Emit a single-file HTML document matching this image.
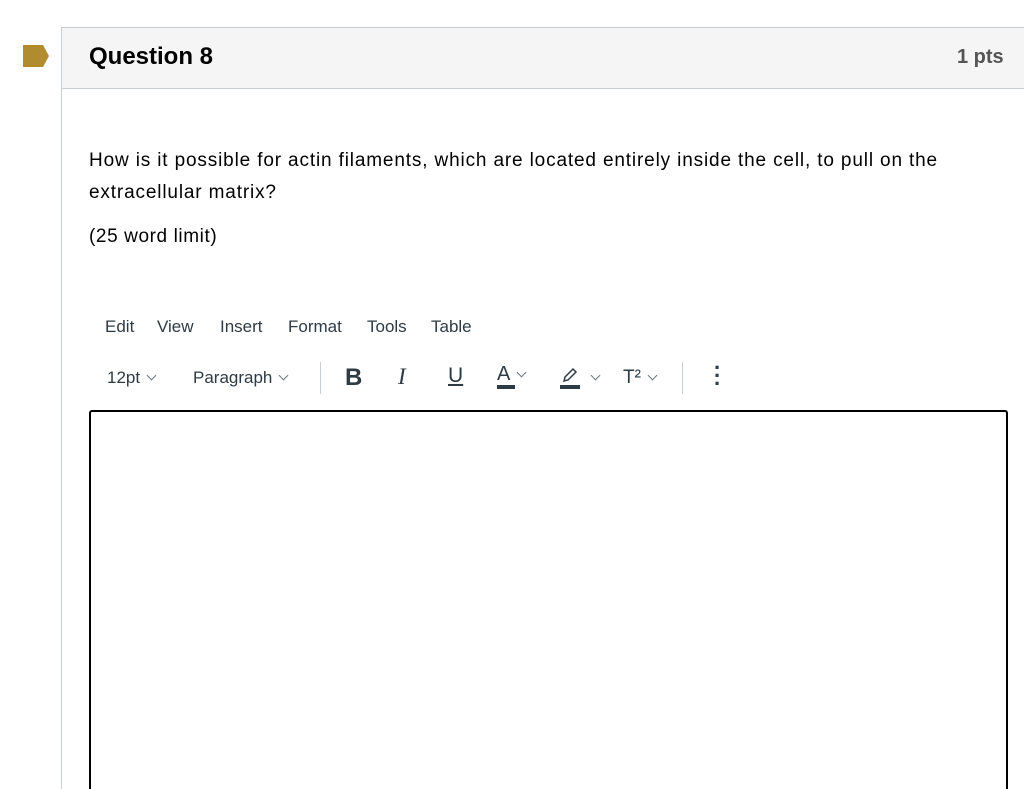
<!DOCTYPE html>
<html style="overflow:hidden;height:789px"><head><style>
body{margin:0;width:1024px;height:789px;overflow:hidden;background:#fff;font-family:"Liberation Sans",sans-serif;color:#2d3b45;position:relative}
.panel{position:absolute;left:61px;top:27px;width:1000px;height:762px;border:1px solid #c7cdd1;border-bottom:none;box-sizing:border-box}
.hdr{position:absolute;left:62px;top:28px;width:962px;height:60px;background:#f5f5f5;border-bottom:1px solid #c7cdd1}
.t{position:absolute;white-space:nowrap}
.chev{display:inline-block;width:6px;height:6px;border-right:1px solid #6b7780;border-bottom:1px solid #6b7780;transform:rotate(45deg);margin:0 0 4px 8px}
.m{position:absolute;top:317px;font-size:17px}
</style></head><body>
<svg style="position:absolute;left:23px;top:45px" width="26" height="22"><polygon points="0,0 20,0 26,11 20,22 0,22" fill="#b08c2e"/></svg>
<div class="panel"></div>
<div class="hdr"></div>
<div class="t" style="left:89px;top:43px;font-size:24px;font-weight:bold;color:#000">Question 8</div>
<div class="t" style="left:957px;top:46px;font-size:20px;font-weight:bold;color:#555">1 pts</div>
<div class="t" style="left:89px;top:145px;font-size:19px;line-height:32px;color:#000;letter-spacing:0.85px">How is it possible for actin filaments, which are located entirely inside the cell, to pull on the<br>extracellular matrix?</div>
<div class="t" style="left:89px;top:226px;font-size:19px;color:#000;letter-spacing:0.6px">(25 word limit)</div>
<div class="m" style="left:105px">Edit</div>
<div class="m" style="left:157px">View</div>
<div class="m" style="left:220px">Insert</div>
<div class="m" style="left:288px">Format</div>
<div class="m" style="left:367px">Tools</div>
<div class="m" style="left:431px">Table</div>
<div class="t" style="left:107px;top:368px;font-size:17px">12pt<span class="chev"></span></div>
<div class="t" style="left:193px;top:368px;font-size:17px">Paragraph<span class="chev"></span></div>
<div style="position:absolute;left:320px;top:362px;width:1px;height:32px;background:#c7cdd1"></div>
<div class="t" style="left:345px;top:364px;font-size:24px;font-weight:bold">B</div>
<div class="t" style="left:398px;top:364px;font-size:23px;font-style:italic;font-family:'Liberation Serif',serif">I</div>
<div class="t" style="left:448px;top:364px;font-size:21px;text-decoration:underline">U</div>
<div class="t" style="left:497px;top:363px;font-size:20px">A<span class="chev"></span></div>
<div style="position:absolute;left:497px;top:385px;width:18px;height:4px;background:#2d3b45"></div>
<svg style="position:absolute;left:560px;top:366px" width="20" height="18"><path d="M4 15 L5 11 L13 3 L16 6 L8 14 Z" fill="none" stroke="#2d3b45" stroke-width="1.5"/></svg>
<div style="position:absolute;left:560px;top:385px;width:20px;height:4px;background:#2d3b45"></div>
<div class="chev" style="position:absolute;left:584px;top:372px"></div>
<div class="t" style="left:623px;top:367px;font-size:19px">T²<span class="chev"></span></div>
<div style="position:absolute;left:682px;top:362px;width:1px;height:32px;background:#c7cdd1"></div>
<div class="t" style="left:714px;top:364px;font-size:22px;font-weight:bold;line-height:8px;width:5px;text-align:center">·<br>·<br>·</div>
<div style="position:absolute;left:89px;top:410px;width:919px;height:400px;border:2px solid #000;border-bottom:none;border-radius:3px 3px 0 0;box-sizing:border-box"></div>
</body></html>
